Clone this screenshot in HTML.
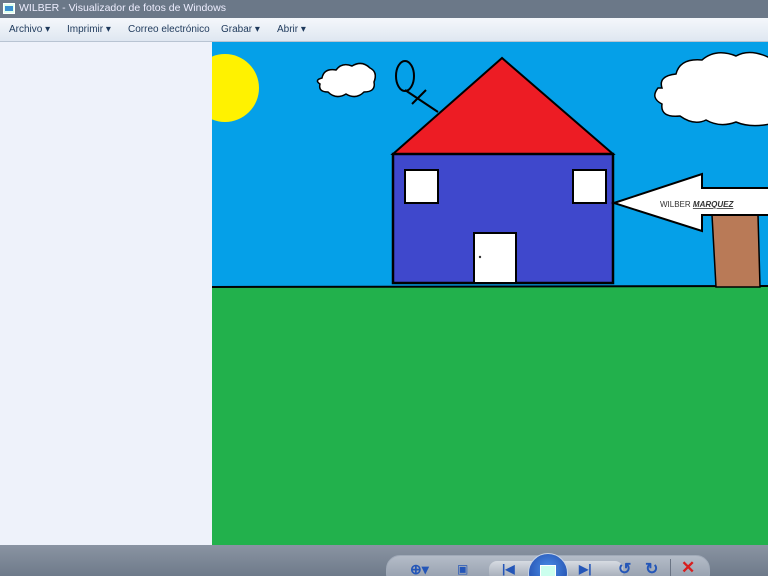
<!DOCTYPE html>
<html style="overflow:hidden"><head><style>
html,body{margin:0;width:768px;height:576px;overflow:hidden}
body{font-family:"Liberation Sans",sans-serif;position:relative;background:#eef2fa}
#title{position:absolute;left:0;top:0;width:768px;height:18px;background:#6b7888;color:#eef;font-size:10.5px;line-height:17px}
#menu{position:absolute;left:0;top:18px;width:768px;height:23px;background:linear-gradient(#f4f7fb,#dfe7f1);border-bottom:1px solid #b8c4d2;font-size:10px;color:#1e395b;line-height:23px}
#menu span{position:absolute;white-space:nowrap}
#side{position:absolute;left:0;top:42px;width:212px;height:503px;background:#eef2fa}
#bot{position:absolute;left:0;top:545px;width:768px;height:31px;overflow:hidden;background:linear-gradient(#8a94a2,#6e7a8a)}
</style></head><body>
<div id="title"><svg style="position:absolute;left:3px;top:3px" width="12" height="11"><rect x="0.5" y="0.5" width="11" height="10" fill="#dfe" stroke="#fff"/><rect x="2" y="3" width="8" height="5" fill="#3a8fd0"/></svg><span style="position:absolute;left:19px">WILBER - Visualizador de fotos de Windows</span></div>
<div id="menu"><span style="left:9px">Archivo ▾</span><span style="left:67px">Imprimir ▾</span><span style="left:128px">Correo electrónico</span><span style="left:221px">Grabar ▾</span><span style="left:277px">Abrir ▾</span></div>
<div id="side"></div>
<svg style="position:absolute;left:212px;top:42px" width="556" height="503" viewBox="212 42 556 503">
<rect x="212" y="42" width="556" height="246" fill="#05a0e8"/>
<rect x="212" y="287" width="556" height="258" fill="#22b14c"/>
<line x1="212" y1="287" x2="768" y2="286" stroke="#000" stroke-width="2"/>
<circle cx="225" cy="88" r="34" fill="#fff200"/>
<path d="M322 78 q2-10 14-8 q6-8 16-4 q10-6 18 2 q8 4 4 14 q2 10-10 10 q-8 8-18 2 q-10 6-18-2 q-10 0-8-8 q-6-4 2-6z" fill="#fff" stroke="#000" stroke-width="1.5"/>
<path d="M662 88 q-4-12 14-14 q4-16 26-14 q14-12 34-4 q14-8 34 2 L770 124 q-20 4-34-2 q-16 6-30-2 q-12 6-26-4 q-20 2-18-12 q-12-6-4-16z" fill="#fff" stroke="#000" stroke-width="1.5"/>
<ellipse cx="405" cy="76" rx="9" ry="15" fill="none" stroke="#000" stroke-width="2"/>
<line x1="405" y1="90" x2="438" y2="112" stroke="#000" stroke-width="2"/>
<line x1="412" y1="104" x2="426" y2="90" stroke="#000" stroke-width="2"/>
<polygon points="502,58 393,154 613,154" fill="#ed1c24" stroke="#000" stroke-width="2"/>
<rect x="393" y="154" width="220" height="129" fill="#3f48cc" stroke="#000" stroke-width="2.5"/>
<rect x="405" y="170" width="33" height="33" fill="#fff" stroke="#000" stroke-width="2"/>
<rect x="573" y="170" width="33" height="33" fill="#fff" stroke="#000" stroke-width="2"/>
<rect x="474" y="233" width="42" height="50" fill="#fff" stroke="#000" stroke-width="2"/>
<circle cx="480" cy="257" r="1.2" fill="#333"/>
<polygon points="712,215 758,215 760,287 716,287" fill="#b97a57" stroke="#000" stroke-width="1.5"/>
<polygon points="614,203 702,174 702,188 770,188 770,215 702,215 702,231" fill="#fff" stroke="#000" stroke-width="2"/>
<text x="660" y="207" font-size="8" fill="#333" font-family="Liberation Sans">WILBER <tspan font-weight="bold" font-style="italic" text-decoration="underline">MARQUEZ</tspan></text>
</svg>
<div id="bot">
<div style="position:absolute;left:386px;top:10px;width:322px;height:30px;border-radius:14px;background:linear-gradient(#b4bcc8,#8d97a6);border:1px solid #a0aab8"></div>
<div style="position:absolute;left:489px;top:16px;width:134px;height:20px;border-radius:8px;background:linear-gradient(#d6dbe2,#9aa3b0)"></div>
<div style="position:absolute;left:528px;top:8px;width:38px;height:38px;border-radius:50%;background:radial-gradient(circle at 50% 40%,#4a8ee8,#1a3fa0);border:1px solid #c8d4e6"></div>
<div style="position:absolute;left:540px;top:20px;width:14px;height:10px;background:#cfe;border:1px solid #fff"></div>
<span style="position:absolute;left:410px;top:16px;color:#2456b8;font-size:14px;font-weight:bold">⊕▾</span>
<span style="position:absolute;left:457px;top:17px;color:#2456b8;font-size:12px">▣</span>
<span style="position:absolute;left:502px;top:17px;color:#2456b8;font-size:12px;font-weight:bold">|◀</span>
<span style="position:absolute;left:579px;top:17px;color:#2456b8;font-size:12px;font-weight:bold">▶|</span>
<span style="position:absolute;left:618px;top:14px;color:#2456b8;font-size:16px;font-weight:bold">↺</span>
<span style="position:absolute;left:645px;top:14px;color:#2456b8;font-size:16px;font-weight:bold">↻</span>
<div style="position:absolute;left:670px;top:14px;width:1px;height:18px;background:#6a7484"></div>
<span style="position:absolute;left:681px;top:13px;color:#d81e1e;font-size:17px;font-weight:bold">✕</span>
</div>
</body></html>
